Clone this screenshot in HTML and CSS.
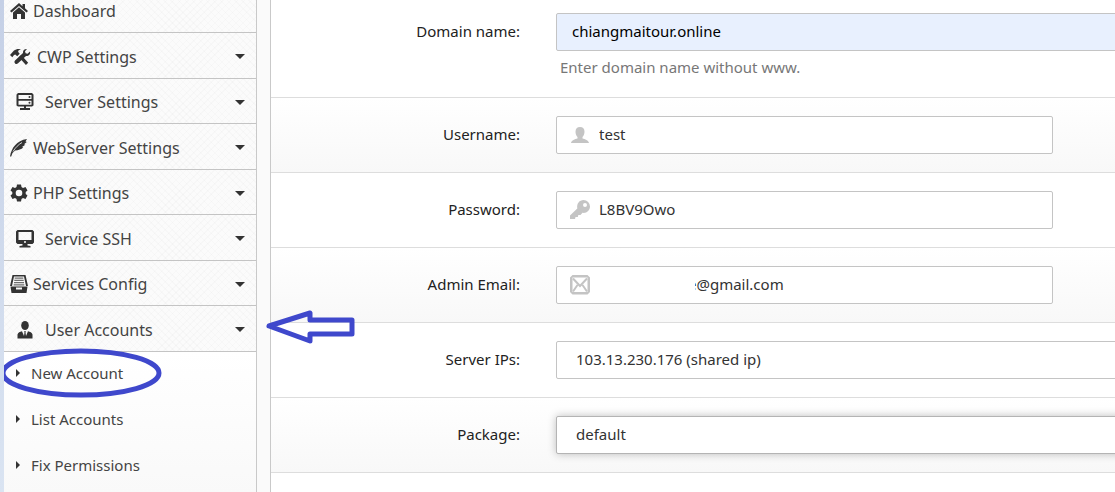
FILE: index.html
```
<!DOCTYPE html>
<html lang="en">
<head>
  <meta charset="UTF-8">
  <meta name="viewport" content="width=device-width, initial-scale=1.0">
  <title>New Account</title>
  <link rel="stylesheet" href="styles.css">
</head>
<body>
  <div class="page">
    <aside class="sidebar">
      <nav>
        <ul class="menu">
          <li><a href="#">
            <svg class="icon" viewBox="0 0 18 18"><path d="M9 1 0 9l1.500 1.600L9 4l7.500 6.600L18 9l-3-2.700V2h-2.500v2.200z"/><path d="M3 10.500 9 5.300l6 5.200V17h-4v-5H7v5H3z"/></svg>
            <span>Dashboard</span></a></li>
          <li><a href="#">
            <svg class="icon icon-wide" viewBox="0 0 22 18"><path d="M0 7 4 2.500C6 .8 8.500.6 11 1.200 9 1.800 8 2.600 8.200 4l1.500 1.800-2.500 2.500L5.300 6.500 4 7 2.300 9.200z"/><path d="m9 9.200 2.200-2.300 7 7.800-2.300 2.200z"/><path d="m5 12.500 8-7.500C12.600 2.500 14.500.8 17 1l-2 2.200.6 2 2 .6L20 3.600c.7 2.600-1.200 4.700-4 4.500l-8 7.200a2 2 0 1 1-3-2.800z"/></svg>
            <span>CWP Settings</span><i class="caret"></i></a></li>
          <li class="indent"><a href="#">
            <svg class="icon" viewBox="0 0 18 18"><path fill-rule="evenodd" d="M2 0h14l1.500 1.500v11L16 13.500H2L.5 12.500v-11zM2.500 2v4h13V2zm0 5.700v4h13v-4z"/><path d="M8 13h2v2h4v2H4v-2h4z"/><circle cx="13.500" cy="4" r="1"/><circle cx="13.500" cy="9.800" r="1"/></svg>
            <span>Server Settings</span><i class="caret"></i></a></li>
          <li><a href="#">
            <svg class="icon" viewBox="0 0 18 18"><path d="M0 17.500C1.500 9 6.500 1.500 17 0l-1.500 2.500 1.300.4-2.800 2.400 1.300.5-3.300 2.200 1.300.5c-2 1.800-4.800 2.800-8.200 3L2.500 14 1.200 17.500z"/><path d="M3 12.500C5.500 8.500 8.500 5.500 12 3.500" fill="none" stroke="#fafafa" stroke-width=".8"/></svg>
            <span>WebServer Settings</span><i class="caret"></i></a></li>
          <li><a href="#">
            <svg class="icon" viewBox="0 0 18 18"><path fill-rule="evenodd" d="M7 .5h4l.5 2.500 1.500.9 2.500-.9 2 3.500L15.700 8v2l1.800 1.500-2 3.500-2.500-.9-1.500.9-.5 2.500H7L6.500 15l-1.500-.9-2.500.9-2-3.500L2.300 10V8L.5 6.500l2-3.500 2.500.9L6.500 3zM9 5.700a3.300 3.300 0 1 0 0 6.600 3.300 3.300 0 0 0 0-6.600z"/></svg>
            <span>PHP Settings</span><i class="caret"></i></a></li>
          <li class="indent"><a href="#">
            <svg class="icon" viewBox="0 0 18 18"><path fill-rule="evenodd" d="M1.500 0h15L18 1.500v11L16.500 14h-15L0 12.500v-11zM2.500 2v8h13V2zM9 11a1 1 0 1 0 0 2 1 1 0 0 0 0-2z"/><path d="M6.500 14h5v1.500l3 .5v1.500h-11V16l3-.5z"/></svg>
            <span>Service SSH</span><i class="caret"></i></a></li>
          <li><a href="#">
            <svg class="icon" viewBox="0 0 18 18"><path fill-rule="evenodd" d="M2.500 0h13L18 11h-2L14 1.500H4L2 11H0z"/><path d="M4.700 2.500h8.600v1.200H4.700zM4.300 4.800h9.400V6H4.300zM4 7h10v1.200H4zM3.700 9.200h10.600v1.200H3.700z" opacity=".7"/><path fill-rule="evenodd" d="M.5 11.500h17L16.500 18h-15zM6 12.500v2h6v-2z"/></svg>
            <span>Services Config</span><i class="caret"></i></a></li>
          <li class="indent"><a href="#">
            <svg class="icon" viewBox="0 0 18 18"><ellipse cx="9" cy="4.500" rx="3.800" ry="4.500"/><path d="M1.500 17.500v-4C2 11.500 4 11 6 10.300L8 15l.5-3.500L8 10.300h2l-.5 1.200L10 15l2-4.700c2 .7 4 1.200 4.500 3.200v4z"/></svg>
            <span>User Accounts</span><i class="caret"></i></a></li>
        </ul>
        <ul class="submenu">
          <li><a href="#"><i class="arrow"></i>New Account
            <svg class="circle-mark" viewBox="0 0 160 50"><ellipse cx="77" cy="25" rx="78" ry="22"/></svg></a></li>
          <li><a href="#"><i class="arrow"></i>List Accounts</a></li>
          <li><a href="#"><i class="arrow"></i>Fix Permissions</a></li>
        </ul>
      </nav>
      <svg class="arrow-mark" viewBox="0 0 92 36"><path d="M5 18 46 5v7h42v14H46v7z"/></svg>
    </aside>

    <main class="content">
      <form>
        <div class="row row-first">
          <label for="domain">Domain name:</label>
          <div class="field wide">
            <input type="text" id="domain" class="autofilled" value="chiangmaitour.online">
            <p class="hint">Enter domain name without www.</p>
          </div>
        </div>
        <div class="row">
          <label for="username">Username:</label>
          <div class="field">
            <svg class="field-icon" viewBox="0 0 20 20"><path d="M10 2c3 0 4.500 1.800 4.500 4.800 0 2.200-.8 4-2 5.200v1.500c2.500.8 6 1.500 6.500 4.500H1c.5-3 4-3.700 6.500-4.500V12c-1.200-1.200-2-3-2-5.200C5.500 3.800 7 2 10 2z"/></svg>
            <input type="text" id="username" class="with-icon" value="test">
          </div>
        </div>
        <div class="row">
          <label for="password">Password:</label>
          <div class="field">
            <svg class="field-icon" viewBox="0 0 20 20"><path fill-rule="evenodd" d="M13.500 0A6.500 6.500 0 0 1 20 6.500c0 4-3.500 7-7.500 6.300L10.500 15H8.300l-.5 2H5.500L5 19H0v-3.500l7.300-7C6.500 3.500 9.500 0 13.500 0zM15 3a2 2 0 1 0 0 4 2 2 0 0 0 0-4z"/></svg>
            <input type="text" id="password" class="with-icon" value="L8BV9Owo">
          </div>
        </div>
        <div class="row">
          <label for="email">Admin Email:</label>
          <div class="field">
            <svg class="field-icon" viewBox="0 0 20 20"><path fill-rule="evenodd" d="M2.500 0h15L20 2.500v14.500L17.500 19.500h-15L0 17V2.500zM2.500 2.500v14.500h15V2.500z"/><path d="m3 3.500 7 7.500 7-7.500M3 16.500 7.500 10M17 16.500 12.500 10" fill="none" stroke="#c4c4c4" stroke-width="2"/></svg>
            <input type="text" id="email" class="masked" value="e@gmail.com">
            <span class="mask"></span>
          </div>
        </div>
        <div class="row">
          <label for="ips">Server IPs:</label>
          <div class="field wide">
            <select id="ips"><option>103.13.230.176 (shared ip)</option></select>
          </div>
        </div>
        <div class="row">
          <label for="package">Package:</label>
          <div class="field wide">
            <select id="package" class="focused"><option>default</option></select>
          </div>
        </div>
      </form>
    </main>
  </div>
</body>
</html>
```

FILE: styles.css
```
* {
  box-sizing: border-box;
}

body {
  margin: 0;
  font-family: "Noto Sans", "Open Sans", sans-serif;
  font-size: 15px;
  color: #333;
  background-color: #fafafa;
}

ul {
  list-style: none;
  margin: 0;
  padding: 0;
}

.page {
  display: flex;
  min-height: 100vh;
  overflow: hidden;
}

/* sidebar */
.sidebar {
  position: relative;
  width: 257px;
  flex-shrink: 0;
  border-right: 1px solid #c9c9c9;
  background: linear-gradient(#c5d0e6, #dae4f2) left / 4px 100% no-repeat;
  padding-left: 4px;
}

.menu li {
  height: 45px;
  border-bottom: 1px solid #c4c4c4;
  background-color: #fbfbfb;
  background-image:
    repeating-linear-gradient(45deg, rgba(0,0,0,0.015) 0 1px, transparent 1px 5px),
    repeating-linear-gradient(-45deg, rgba(0,0,0,0.015) 0 1px, transparent 1px 5px);
}

.menu li:nth-child(even) {
  height: 46px;
}

.menu li:first-child {
  height: 33px;
}

.menu li:first-child a {
  height: 20px;
}

.menu a {
  display: flex;
  align-items: center;
  gap: 5px;
  height: 100%;
  padding: 2px 11px 0 6px;
  font-size: 16px;
  color: #444;
  text-decoration: none;
}

.menu .indent a {
  gap: 11px;
  padding-left: 12px;
}

.icon {
  width: 18px;
  height: 18px;
  fill: #333;
  flex-shrink: 0;
}

.icon-wide {
  width: 22px;
}

.caret {
  margin-left: auto;
  border: 5px solid transparent;
  border-top-color: #333;
  border-bottom: 0;
}

.submenu {
  padding-bottom: 4px;
  background: linear-gradient(#fff, #f9f9f9);
}

.submenu li {
  height: 46px;
}

.submenu a {
  position: relative;
  display: flex;
  align-items: center;
  gap: 11px;
  height: 100%;
  padding: 0 0 4px 12px;
  color: #444;
  text-decoration: none;
}

.arrow {
  border: 4px solid transparent;
  border-left-color: #333;
  border-right: 0;
}

/* hand-drawn marks */
.circle-mark,
.arrow-mark {
  position: absolute;
  fill: none;
  stroke: #3f48cc;
  stroke-linejoin: round;
}

.circle-mark {
  left: 0;
  top: -4px;
  width: 160px;
  height: 50px;
  stroke-width: 5;
}

.arrow-mark {
  left: 264px;
  top: 308px;
  width: 92px;
  height: 36px;
  stroke-width: 5;
  z-index: 1;
}

/* form */
.content {
  flex: 1;
  min-width: 0;
  margin-left: 13px;
  border-left: 1px solid #c9c9c9;
  background-color: #fff;
}

.row {
  display: grid;
  grid-template-columns: 249px 1fr;
  column-gap: 36px;
  padding: 18px 0;
  border-bottom: 1px solid #ddd;
}

.row:nth-child(even) {
  background: linear-gradient(#fff, #f8f8f8);
}

.row-first {
  padding-top: 13px;
}

.row label {
  line-height: 36px;
  text-align: right;
  color: #222;
}

.field {
  position: relative;
  width: 497px;
  max-width: 100%;
}

.field.wide {
  width: auto;
  max-width: none;
  margin-right: -20px;
}

input,
select {
  display: block;
  width: 100%;
  height: 38px;
  padding: 0 15px 2px;
  border: 1px solid #c4c4c4;
  border-radius: 2px;
  outline: none;
  appearance: none;
  background-color: #fff;
  font-family: inherit;
  font-size: 15px;
  color: #333;
}

select {
  padding-left: 19px;
}

.autofilled {
  background-color: #e8f0fe;
  color: #000;
}

.with-icon {
  padding-left: 42px;
}

.masked {
  padding-left: 131px;
}

.mask {
  position: absolute;
  left: 42px;
  top: 8px;
  width: 97px;
  height: 22px;
  background-color: #fff;
}

.focused {
  border-color: #b4b4b4;
  box-shadow: 0 0 8px rgba(0,0,0,0.25);
}

.field-icon {
  position: absolute;
  left: 14px;
  top: 9px;
  width: 20px;
  height: 20px;
  fill: #c4c4c4;
}

.hint {
  margin: 5px 0 1px 4px;
  line-height: 22px;
  color: #777;
}
```
